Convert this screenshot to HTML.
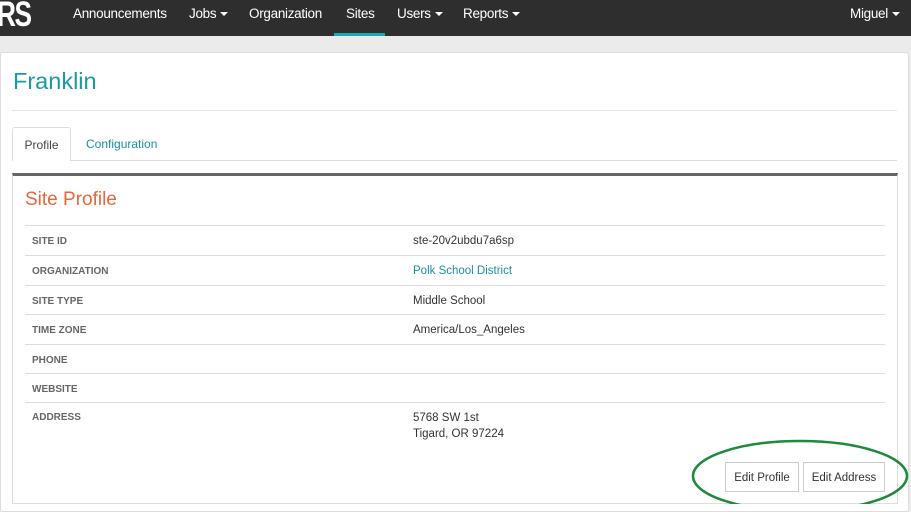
<!DOCTYPE html>
<html><head><style>
*{box-sizing:border-box;margin:0;padding:0}
body{width:911px;height:504px;overflow:hidden;background:#ebebeb;font-family:"Liberation Sans",sans-serif;position:relative;font-size:12px;color:#333}
.nav{position:absolute;left:0;top:0;width:911px;height:36px;background:#2e2e2e;color:#fff;font-size:13.5px;letter-spacing:-0.3px}
.nav span{position:absolute;top:6px}
.caret{display:inline-block;border-left:4px solid transparent;border-right:4px solid transparent;border-top:4px solid #fff;vertical-align:middle;margin-left:4px}
.logo{position:absolute;left:-3px;top:-5px;font-size:35px;font-weight:bold;letter-spacing:-2px;transform:scaleX(0.75);transform-origin:left;color:#fff}
.act{position:absolute;left:334px;top:33px;width:51px;height:3px;background:#1ba8b0}
.card{position:absolute;left:0;top:52px;width:909px;height:460px;background:#fff;border:1px solid #ddd;border-radius:3px}
h1{position:absolute;left:13px;top:68px;font-size:23.5px;font-weight:normal;color:#1a9aa5}
.hr{position:absolute;left:12px;top:110px;width:885px;height:1px;background:#e5e5e5}
.tabline{position:absolute;left:12px;top:160px;width:885px;height:1px;background:#ddd}
.tab{position:absolute;left:12px;top:127px;width:59px;height:34px;background:#fff;border:1px solid #ddd;border-bottom:none;border-radius:3px 3px 0 0;font-size:12px;padding-top:10px;text-align:center;color:#444}
.tab2{position:absolute;left:86px;top:137px;color:#1a8f9c;font-size:12px}
.panel{position:absolute;left:12px;top:173px;width:886px;height:331px;border:1px solid #ddd;border-top:3px solid #666}
.sp{position:absolute;left:25px;top:189px;font-size:19px;color:#e8663a}
.line{position:absolute;left:25px;width:860px;height:1px;background:#ddd}
.lab{position:absolute;left:32px;font-size:10px;font-weight:bold;color:#666}
.val{position:absolute;left:413px;font-size:11.5px;color:#333}
.btn{position:absolute;top:462px;height:30px;border:1px solid #ccc;background:#fff;font-size:11.5px;padding-top:9px;text-align:center;color:#333}
</style></head><body>
<div class="nav">
<div class="logo">RS</div>
<span style="left:73px">Announcements</span>
<span style="left:189px">Jobs<i class="caret"></i></span>
<span style="left:249px">Organization</span>
<span style="left:346px">Sites</span>
<span style="left:397px">Users<i class="caret"></i></span>
<span style="left:463px">Reports<i class="caret"></i></span>
<span style="left:850px">Miguel<i class="caret"></i></span>
<div class="act"></div>
</div>
<div class="card"></div>
<h1>Franklin</h1>
<div class="hr"></div>
<div class="tabline"></div>
<div class="tab">Profile</div>
<div class="tab2">Configuration</div>
<div class="panel"></div>
<div class="sp">Site Profile</div>
<div class="line" style="top:225px"></div>
<div class="line" style="top:255px"></div>
<div class="line" style="top:285px"></div>
<div class="line" style="top:314px"></div>
<div class="line" style="top:344px"></div>
<div class="line" style="top:373px"></div>
<div class="line" style="top:402px"></div>
<div class="lab" style="top:236px">SITE ID</div><div class="val" style="top:235px">ste-20v2ubdu7a6sp</div>
<div class="lab" style="top:266px">ORGANIZATION</div><div class="val" style="top:265px;color:#1a8f9c">Polk School District</div>
<div class="lab" style="top:296px">SITE TYPE</div><div class="val" style="top:295px">Middle School</div>
<div class="lab" style="top:325px">TIME ZONE</div><div class="val" style="top:324px">America/Los_Angeles</div>
<div class="lab" style="top:355px">PHONE</div>
<div class="lab" style="top:384px">WEBSITE</div>
<div class="lab" style="top:412px">ADDRESS</div><div class="val" style="top:410px;line-height:16px">5768 SW 1st<br>Tigard, OR 97224</div>
<div class="btn" style="left:725px;width:74px">Edit Profile</div>
<div class="btn" style="left:803px;width:82px">Edit Address</div>
<svg style="position:absolute;left:0;top:0" width="911" height="504"><ellipse cx="800" cy="476" rx="107" ry="35" fill="none" stroke="#1e8a3a" stroke-width="2.5"/></svg>
</body></html>
